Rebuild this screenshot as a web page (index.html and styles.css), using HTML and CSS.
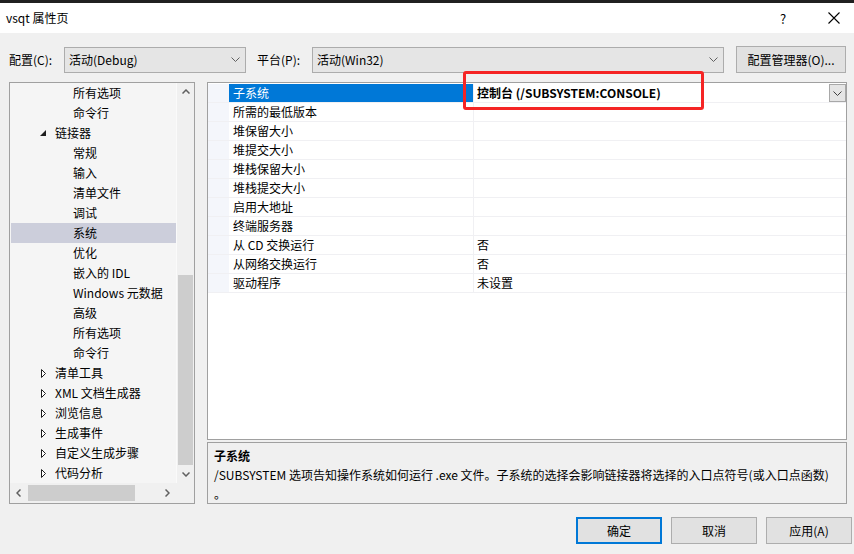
FILE: index.html
```html
<!DOCTYPE html>
<html>
<head>
<meta charset="UTF-8" />
<title>vsqt 属性页</title>
<link rel="stylesheet" href="styles.css">
</head>
<body>
<div class="taskbar"></div>
<div class="titlebar">
  <span class="title">vsqt 属性页</span>
  <span class="help">?</span>
  <svg class="close" width="12" height="12" viewBox="0 0 12 12"><path d="M0.5 0.5 L11.5 11.5 M11.5 0.5 L0.5 11.5" stroke="#000" stroke-width="1.1" fill="none"/></svg>
</div>

<div class="toolbar">
  <span class="label">配置(C):</span>
  <div class="combo combo-config">
    <span>活动(Debug)</span>
    <svg width="9" height="5" viewBox="0 0 9 5"><path d="M0.5 0.5 L4.5 4.5 L8.5 0.5" stroke="#606060" fill="none"/></svg>
  </div>
  <span class="label label-platform">平台(P):</span>
  <div class="combo combo-platform">
    <span>活动(Win32)</span>
    <svg width="9" height="5" viewBox="0 0 9 5"><path d="M0.5 0.5 L4.5 4.5 L8.5 0.5" stroke="#606060" fill="none"/></svg>
  </div>
  <div class="btn btn-manager">配置管理器(O)...</div>
</div>

<div class="main">
  <div class="tree">
    <div class="tree-view">
      <div class="tree-rows">
        <div class="node lvl2">所有选项</div>
        <div class="node lvl2">命令行</div>
        <div class="node lvl1"><svg class="exp" width="16" height="7" viewBox="0 0 16 7"><polygon points="7,0 7,6 1,6" fill="#1e1e1e"/></svg>链接器</div>
        <div class="node lvl2">常规</div>
        <div class="node lvl2">输入</div>
        <div class="node lvl2">清单文件</div>
        <div class="node lvl2">调试</div>
        <div class="node lvl2 selected">系统</div>
        <div class="node lvl2">优化</div>
        <div class="node lvl2">嵌入的 IDL</div>
        <div class="node lvl2">Windows 元数据</div>
        <div class="node lvl2">高级</div>
        <div class="node lvl2">所有选项</div>
        <div class="node lvl2">命令行</div>
        <div class="node lvl1"><svg class="exp" width="16" height="9" viewBox="0 0 16 9"><polygon points="2.5,0.5 6.5,4.5 2.5,8.5" fill="#fff" stroke="#1e1e1e"/></svg>清单工具</div>
        <div class="node lvl1"><svg class="exp" width="16" height="9" viewBox="0 0 16 9"><polygon points="2.5,0.5 6.5,4.5 2.5,8.5" fill="#fff" stroke="#1e1e1e"/></svg>XML 文档生成器</div>
        <div class="node lvl1"><svg class="exp" width="16" height="9" viewBox="0 0 16 9"><polygon points="2.5,0.5 6.5,4.5 2.5,8.5" fill="#fff" stroke="#1e1e1e"/></svg>浏览信息</div>
        <div class="node lvl1"><svg class="exp" width="16" height="9" viewBox="0 0 16 9"><polygon points="2.5,0.5 6.5,4.5 2.5,8.5" fill="#fff" stroke="#1e1e1e"/></svg>生成事件</div>
        <div class="node lvl1"><svg class="exp" width="16" height="9" viewBox="0 0 16 9"><polygon points="2.5,0.5 6.5,4.5 2.5,8.5" fill="#fff" stroke="#1e1e1e"/></svg>自定义生成步骤</div>
        <div class="node lvl1"><svg class="exp" width="16" height="9" viewBox="0 0 16 9"><polygon points="2.5,0.5 6.5,4.5 2.5,8.5" fill="#fff" stroke="#1e1e1e"/></svg>代码分析</div>
      </div>
      <div class="vscroll">
        <div class="arrow"><svg width="8" height="5" viewBox="0 0 8 5"><path d="M0.5 4.5 L4 1 L7.5 4.5" stroke="#606060" stroke-width="1.5" fill="none"/></svg></div>
        <div class="track"><div class="thumb"></div></div>
        <div class="arrow"><svg width="8" height="5" viewBox="0 0 8 5"><path d="M0.5 0.5 L4 4 L7.5 0.5" stroke="#606060" stroke-width="1.5" fill="none"/></svg></div>
      </div>
    </div>
    <div class="hscroll">
      <div class="arrow"><svg width="5" height="8" viewBox="0 0 5 8"><path d="M4.5 0.5 L1 4 L4.5 7.5" stroke="#606060" stroke-width="1.5" fill="none"/></svg></div>
      <div class="htrack"><div class="hthumb"></div></div>
      <div class="arrow"><svg width="5" height="8" viewBox="0 0 5 8"><path d="M0.5 0.5 L4 4 L0.5 7.5" stroke="#606060" stroke-width="1.5" fill="none"/></svg></div>
      <div class="corner"></div>
    </div>
  </div>

  <div class="side">
    <div class="grid">
      <div class="prop selected">
        <div class="gutter"></div>
        <div class="name">子系统</div>
        <div class="value"><b>控制台 (/SUBSYSTEM:CONSOLE)</b>
          <div class="drop"><svg width="9" height="5" viewBox="0 0 9 5"><path d="M0.5 0.5 L4.5 4.5 L8.5 0.5" stroke="#404040" fill="none"/></svg></div>
        </div>
      </div>
      <div class="prop"><div class="gutter"></div><div class="name">所需的最低版本</div><div class="value"></div></div>
      <div class="prop"><div class="gutter"></div><div class="name">堆保留大小</div><div class="value"></div></div>
      <div class="prop"><div class="gutter"></div><div class="name">堆提交大小</div><div class="value"></div></div>
      <div class="prop"><div class="gutter"></div><div class="name">堆栈保留大小</div><div class="value"></div></div>
      <div class="prop"><div class="gutter"></div><div class="name">堆栈提交大小</div><div class="value"></div></div>
      <div class="prop"><div class="gutter"></div><div class="name">启用大地址</div><div class="value"></div></div>
      <div class="prop"><div class="gutter"></div><div class="name">终端服务器</div><div class="value"></div></div>
      <div class="prop"><div class="gutter"></div><div class="name">从 CD 交换运行</div><div class="value">否</div></div>
      <div class="prop"><div class="gutter"></div><div class="name">从网络交换运行</div><div class="value">否</div></div>
      <div class="prop"><div class="gutter"></div><div class="name">驱动程序</div><div class="value">未设置</div></div>
    </div>
    <div class="desc">
      <div class="desc-title">子系统</div>
      <div>/SUBSYSTEM 选项告知操作系统如何运行 .exe 文件。子系统的选择会影响链接器将选择的入口点符号(或入口点函数)<br/>。</div>
    </div>
  </div>
</div>

<div class="buttons">
  <div class="btn btn-ok">确定</div>
  <div class="btn">取消</div>
  <div class="btn">应用(A)</div>
</div>

<div class="mark"></div>
</body>
</html>
```

FILE: styles.css
```css
body { margin: 0; width: 854px; height: 554px; overflow: hidden; background: #f0f0f0; font-family: "Noto Sans CJK SC", sans-serif; font-size: 12px; color: #000; position: relative; }

.taskbar { height: 3px; background: #202020; }
.titlebar { height: 30px; background: #fff; display: flex; align-items: center; padding-left: 6px; }
.title { flex: 1; font-size: 12px; line-height: 30px; }
.help { font-size: 13px; width: 12px; margin-right: 36px; }
.close { margin-right: 14px; }

.toolbar { display: flex; align-items: center; margin-top: 13px; padding-left: 9px; height: 27px; }
.label { width: 55px; line-height: 26px; }
.label-platform { margin-left: 11px; }
.combo { height: 26px; box-sizing: border-box; border: 1px solid #acacac; background: #e5e5e5; display: flex; align-items: center; justify-content: space-between; padding: 0 5px 0 4px; }
.combo-config { width: 182px; }
.combo-platform { width: 412px; }
.btn { height: 27px; box-sizing: border-box; border: 1px solid #adadad; background: #e1e1e1; display: flex; align-items: center; justify-content: center; }
.btn-manager { width: 110px; margin-left: 12px; }

.main { display: flex; margin-top: 9px; padding-left: 9px; height: 422px; }

.tree { width: 186px; box-sizing: border-box; border: 1px solid #a0a0a0; display: flex; flex-direction: column; }
.tree-view { display: flex; height: 400px; }
.tree-rows { width: 166px; background: #f5f5f5; padding-left: 1px; box-sizing: border-box; }
.node { height: 20px; line-height: 20px; white-space: nowrap; display: flex; align-items: center; }
.lvl1 { padding-left: 28px; }
.lvl2 { padding-left: 62px; }
.exp { flex: none; }
.selected.node { background: #cccedb; }
.vscroll { width: 18px; border-left: 1px solid #fafafa; box-sizing: border-box; display: flex; flex-direction: column; background: #f0f0f0; }
.vscroll .arrow { height: 17px; display: flex; align-items: center; justify-content: center; }
.track { flex: 1; padding: 0 1px; }
.thumb { margin-top: 175px; height: 190px; background: #cdcdcd; }
.hscroll { flex: 1; display: flex; background: #f0f0f0; }
.hscroll .arrow { width: 17px; display: flex; align-items: center; justify-content: center; }
.htrack { width: 132px; padding: 2px 0; box-sizing: border-box; }
.hthumb { width: 107px; height: 100%; margin-left: 1px; background: #cdcdcd; }
.corner { width: 18px; }

.side { margin-left: 12px; width: 640px; display: flex; flex-direction: column; gap: 2px; }
.grid { height: 359px; box-sizing: border-box; border: 1px solid #a0a0a0; background: #fff; padding-top: 1px; }
.prop { display: flex; height: 19px; box-sizing: border-box; border-bottom: 1px solid #f0f0f3; line-height: 18px; }
.gutter { width: 21px; background: #f4f6fb; }
.name { width: 245px; padding-left: 4px; box-sizing: border-box; border-right: 1px solid #f0f0f3; white-space: nowrap; }
.value { flex: 1; padding-left: 3px; display: flex; justify-content: space-between; white-space: nowrap; }
.prop.selected .name { background: #0078d7; color: #fff; }
.drop { width: 17px; height: 18px; box-sizing: border-box; border: 1px solid #a8a8a8; background: #e5e5e5; display: flex; align-items: center; justify-content: center; }

.desc { flex: 1; box-sizing: border-box; border: 1px solid #a0a0a0; padding: 3px 6px 0; line-height: 19px; }
.desc-title { font-weight: bold; }

.buttons { display: flex; justify-content: flex-end; gap: 9px; margin-top: 13px; padding-right: 2px; }
.buttons .btn { width: 86px; }
.btn-ok { border: 2px solid #0078d7; }

/* red highlight drawn over the screenshot */
.mark { position: absolute; left: 463px; top: 71px; width: 241px; height: 39px; box-sizing: border-box; border: 3px solid #f52525; border-radius: 3px; }
```
